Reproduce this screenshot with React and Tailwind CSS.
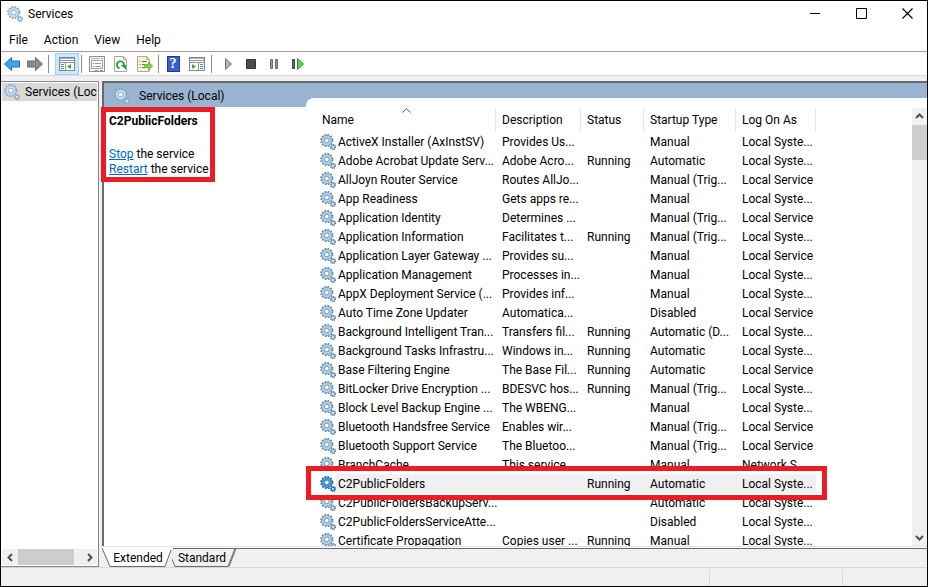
import React, { useState } from 'react';

const SERVICES = [
  ['ActiveX Installer (AxInstSV)', 'Provides Us...', '', 'Manual', 'Local Syste...'],
  ['Adobe Acrobat Update Serv...', 'Adobe Acro...', 'Running', 'Automatic', 'Local Syste...'],
  ['AllJoyn Router Service', 'Routes AllJo...', '', 'Manual (Trig...', 'Local Service'],
  ['App Readiness', 'Gets apps re...', '', 'Manual', 'Local Syste...'],
  ['Application Identity', 'Determines ...', '', 'Manual (Trig...', 'Local Service'],
  ['Application Information', 'Facilitates t...', 'Running', 'Manual (Trig...', 'Local Syste...'],
  ['Application Layer Gateway ...', 'Provides su...', '', 'Manual', 'Local Service'],
  ['Application Management', 'Processes in...', '', 'Manual', 'Local Syste...'],
  ['AppX Deployment Service (...', 'Provides inf...', '', 'Manual', 'Local Syste...'],
  ['Auto Time Zone Updater', 'Automatica...', '', 'Disabled', 'Local Service'],
  ['Background Intelligent Tran...', 'Transfers fil...', 'Running', 'Automatic (D...', 'Local Syste...'],
  ['Background Tasks Infrastru...', 'Windows in...', 'Running', 'Automatic', 'Local Syste...'],
  ['Base Filtering Engine', 'The Base Fil...', 'Running', 'Automatic', 'Local Service'],
  ['BitLocker Drive Encryption ...', 'BDESVC hos...', 'Running', 'Manual (Trig...', 'Local Syste...'],
  ['Block Level Backup Engine ...', 'The WBENG...', '', 'Manual', 'Local Syste...'],
  ['Bluetooth Handsfree Service', 'Enables wir...', '', 'Manual (Trig...', 'Local Service'],
  ['Bluetooth Support Service', 'The Bluetoo...', '', 'Manual (Trig...', 'Local Service'],
  ['BranchCache', 'This service ...', '', 'Manual', 'Network S...'],
  ['C2PublicFolders', '', 'Running', 'Automatic', 'Local Syste...'],
  ['C2PublicFoldersBackupServ...', '', '', 'Automatic', 'Local Syste...'],
  ['C2PublicFoldersServiceAtte...', '', '', 'Disabled', 'Local Syste...'],
  ['Certificate Propagation', 'Copies user ...', 'Running', 'Manual', 'Local Syste...'],
];

const COLUMNS = ['Name', 'Description', 'Status', 'Startup Type', 'Log On As'];

function Gears({ variant = 'normal' }) {
  const tones = {
    normal: { edge: '#5a80a0', fill: '#b3d5ec', small: '#7a9dba' },
    pale: { edge: '#7fa5c4', fill: '#c3def1', small: '#94b4cd' },
    selected: { edge: '#1264ad', fill: '#4b9bdc', small: '#1f72ba' },
  };
  const tone = tones[variant];
  return (
    <svg className="block h-4 w-4 shrink-0" viewBox="0 0 16 16" fill="none" aria-hidden="true">
      <circle cx="6.8" cy="6.5" r="5.8" stroke={tone.edge} strokeWidth="1.6" strokeDasharray="1.7 1.34" />
      <circle cx="6.8" cy="6.5" r="3.9" stroke={tone.fill} strokeWidth="2.8" />
      <circle cx="6.8" cy="6.5" r="5.1" stroke={tone.edge} strokeWidth="0.6" />
      <circle cx="6.8" cy="6.5" r="2.4" fill="#fff" stroke={tone.edge} strokeWidth="0.9" />
      <circle cx="13" cy="13" r="2.6" stroke={tone.edge} strokeWidth="1.2" strokeDasharray="1.1 0.94" />
      <circle cx="13" cy="13" r="1.6" fill="#fff" stroke={tone.small} strokeWidth="1.4" />
    </svg>
  );
}

function Arrow({ flip, fill, stroke }) {
  return (
    <svg className="h-4 w-4" viewBox="0 0 16 16" aria-hidden="true">
      <path
        d={flip ? 'M15.5 8 8.500 1.500V5H.5v6h8v3.500z' : 'M.5 8 7.500 1.500V5h8v6h-8v3.500z'}
        fill={fill}
        stroke={stroke}
        strokeLinejoin="round"
      />
    </svg>
  );
}

function WindowPane({ flip }) {
  return (
    <svg className="h-4 w-4" viewBox="0 0 16 16" shapeRendering="crispEdges" aria-hidden="true">
      <path d="M.5 1.5h15v13H.5z" fill="#fff" stroke="#7d8794" />
      <path d="M1 2h14v1H1z" fill="#a9b3bf" />
      <path d="M1 4h14v1H1zM1 6h14v1H1z" fill="#8d97a3" />
      <path d={flip ? 'M9 7h1v7H9z' : 'M6 7h1v7H6z'} fill="#8d97a3" />
      <path d={flip ? 'M11 8h3v1h-3zM11 10h3v1h-3zM11 12h3v1h-3z' : 'M2 8h3v1H2zM2 10h3v1H2zM2 12h3v1H2z'} fill="#5d83b0" />
      <path d={flip ? 'M3 8v5l4-2.500z' : 'M12 8v5l-4-2.500z'} fill="#3fae2a" shapeRendering="auto" />
    </svg>
  );
}

function PropertiesIcon() {
  return (
    <svg className="h-4 w-4" viewBox="0 0 16 16" shapeRendering="crispEdges" aria-hidden="true">
      <path d="M.5 .5h15v15H.5z" fill="#f6f7f8" stroke="#8b939c" />
      <path d="M2 2h9v1H2zM12 2h2v1h-2z" fill="#a9b3bf" />
      <path d="M2.500 4.500h11v8h-11z" fill="#fff" stroke="#9aa5b1" />
      <path d="M4 7h1v1H4zM4 10h1v1H4z" fill="#4f7fb5" />
      <path d="M6 7h6v1H6zM6 10h6v1H6z" fill="#8d97a3" />
      <path d="M6 14h3v1H6z" fill="#35b4e8" />
      <path d="M11 14h3v1h-3z" fill="#8d97a3" />
    </svg>
  );
}

function RefreshIcon() {
  return (
    <svg className="h-4 w-4" viewBox="0 0 16 16" fill="none" aria-hidden="true">
      <path d="M1.500 .5h9l3 3v12h-12z" fill="#fff" stroke="#a5a5a5" />
      <path d="M10.500 .5v3h3" stroke="#a5a5a5" />
      <path d="M6.500 12.200A3.500 3.500 0 1 1 10.800 9.500" stroke="#2fa03a" strokeWidth="2" />
      <path d="M7.500 9H13v4.500z" fill="#2fa03a" />
    </svg>
  );
}

function ExportIcon() {
  return (
    <svg className="h-4 w-4" viewBox="0 0 16 16" fill="none" aria-hidden="true">
      <path d="M.5 .5h9l3 3v12H.5z" fill="#fdf3cf" stroke="#b5ab8c" />
      <path d="M9.500 .5v3h3" stroke="#b5ab8c" />
      <path d="M2.500 5.500h1M2.500 8.500h1M2.500 11.500h1M5 5.500h5M5 8.500h3M5 11.500h3" stroke="#77705a" />
      <path d="M7.500 8.500h4V6l4.200 4-4.200 4v-2.500h-4z" fill="#7fcf45" stroke="#57a52a" strokeWidth="0.7" />
    </svg>
  );
}

function HelpIcon() {
  return (
    <span className="flex h-4 w-[13px] items-center justify-center border border-[#1d3a94] bg-[#3a5fc8] font-['Liberation_Serif',serif] text-sm font-bold text-white">
      ?
    </span>
  );
}

function Chevron({ dir }) {
  const paths = {
    up: 'M1 6 4.500 2.500 8 6',
    down: 'M1 3 4.500 6.500 8 3',
    left: 'M6 1 2.500 4.500 6 8',
    right: 'M3 1 6.500 4.500 3 8',
  };
  return (
    <svg className="h-[9px] w-[9px]" viewBox="0 0 9 9" fill="none" aria-hidden="true">
      <path d={paths[dir]} stroke="#505050" strokeWidth="2" />
    </svg>
  );
}

function ToolButton({ label, className = 'w-6', children }) {
  return (
    <button aria-label={label} className={`flex h-[22px] items-center justify-center ${className}`}>
      {children}
    </button>
  );
}

function Separator() {
  return <span className="mx-[2px] h-[18px] w-px bg-[#8c8c8c]" />;
}

function TitleBar() {
  return (
    <header className="flex h-[25px] items-center bg-white pl-[6px]">
      <Gears variant="pale" />
      <h1 className="ml-[5px] flex-1">Services</h1>
      <div className="flex h-full gap-[3px]">
        <button aria-label="Minimize" className="flex h-full w-10 items-center justify-center">
          <svg className="h-[11px] w-[11px]" viewBox="0 0 11 11"><path d="M0 5.500h10" stroke="#000" /></svg>
        </button>
        <button aria-label="Maximize" className="flex h-full w-[46px] items-center justify-center">
          <svg className="h-[11px] w-[11px]" viewBox="0 0 11 11"><path d="M.5 .5h10v10h-10z" fill="none" stroke="#000" /></svg>
        </button>
        <button aria-label="Close" className="flex h-full w-10 items-center justify-center">
          <svg className="h-[11px] w-[11px]" viewBox="0 0 11 11"><path d="m.5 .5 10 10m0-10-10 10" stroke="#000" strokeWidth="1.200" /></svg>
        </button>
      </div>
    </header>
  );
}

function Toolbar() {
  return (
    <div className="flex h-6 items-center border-b border-[#dadada] bg-white">
      <ToolButton label="Back" className="w-[22px]"><Arrow fill="#3aa5e8" stroke="#1b6cae" /></ToolButton>
      <ToolButton label="Forward" className="w-[23px]"><Arrow flip fill="#8a8a8a" stroke="#6a6a6a" /></ToolButton>
      <Separator />
      <ToolButton label="Show/Hide Console Tree" className="ml-1 w-6 border border-[#99d1ff] bg-[#cce8ff]"><WindowPane /></ToolButton>
      <Separator />
      <ToolButton label="Properties" className="ml-px w-6"><PropertiesIcon /></ToolButton>
      <ToolButton label="Refresh"><RefreshIcon /></ToolButton>
      <ToolButton label="Export List" className="w-[23px]"><ExportIcon /></ToolButton>
      <Separator />
      <ToolButton label="Help"><HelpIcon /></ToolButton>
      <ToolButton label="Show/Hide Action Pane"><WindowPane flip /></ToolButton>
      <Separator />
      <ToolButton label="Start Service" className="ml-[2px] w-6">
        <svg className="h-3 w-3" viewBox="0 0 12 12"><path d="M3.500 .5v11l6-5.500z" fill="#b0b0b0" stroke="#777" /></svg>
      </ToolButton>
      <ToolButton label="Stop Service" className="w-[22px]">
        <svg className="h-3 w-3" viewBox="0 0 12 12"><path d="M1.500 1.500h9v9h-9z" fill="#4a4a4a" stroke="#333" /></svg>
      </ToolButton>
      <ToolButton label="Pause Service">
        <svg className="h-3 w-3" viewBox="0 0 12 12"><path d="M2.500 1.500h2v9h-2zM7.500 1.500h2v9h-2z" fill="#999" stroke="#666" /></svg>
      </ToolButton>
      <ToolButton label="Restart Service">
        <svg className="h-3 w-3" viewBox="0 0 12 12">
          <path d="M.5 1.500h2v9h-2z" fill="#666" stroke="#444" />
          <path d="M5.500 .5v11l6-5.500z" fill="#5fd04a" stroke="#1f9a22" />
        </svg>
      </ToolButton>
    </div>
  );
}

function ConsoleTree() {
  return (
    <nav className="flex w-[98px] shrink-0 flex-col border-t border-r border-b border-[#828790] bg-white p-px">
      <a href="#local" className="flex h-[18px] items-center overflow-hidden bg-[#d9d9d9] pl-[2px] whitespace-nowrap">
        <Gears variant="pale" />
        <span className="ml-[5px]">Services (Local)</span>
      </a>
      <div className="flex-1" />
      <div className="flex h-[16px] items-center bg-[#f0f0f0]">
        <button aria-label="Scroll left" className="flex w-4 justify-center"><Chevron dir="left" /></button>
        <span className="h-full w-[56px] bg-[#cdcdcd]" />
        <button aria-label="Scroll right" className="ml-auto flex w-4 justify-center"><Chevron dir="right" /></button>
      </div>
    </nav>
  );
}

function ServiceDetails({ name }) {
  return (
    <div className="relative flex-1 bg-white pt-[6px] pl-[5px]">
      <h2 className="leading-4 font-bold">{name}</h2>
      <p className="mt-[18px] leading-[15px]">
        <a href="#stop" className="text-[#0066cc] underline">Stop</a> the service
      </p>
      <p className="leading-[15px]">
        <a href="#restart" className="text-[#0066cc] underline">Restart</a> the service
      </p>
      <div className="pointer-events-none absolute top-0 -left-[3px] h-[75px] w-[114px] border-[5px] border-[#ed1c24]" />
    </div>
  );
}

function ServiceTable({ selected, onSelect }) {
  return (
    <table className="w-[500px] table-fixed border-separate border-spacing-0 whitespace-nowrap">
      <colgroup>
        <col className="w-[180px]" />
        <col className="w-[85px]" />
        <col className="w-[63px]" />
        <col className="w-[92px]" />
        <col className="w-[80px]" />
      </colgroup>
      <thead>
        <tr className="h-6">
          {COLUMNS.map((column) => (
            <th key={column} className="relative border-r border-[#e5e5e5] p-0 pl-[6px] text-left font-normal">
              {column}
              {column === 'Name' && (
                <svg className="absolute top-0 left-[86px] h-[5px] w-[9px]" viewBox="0 0 9 5" fill="none">
                  <path d="M.5 4.500 4.500 .8l4 3.700" stroke="#555" />
                </svg>
              )}
            </th>
          ))}
        </tr>
      </thead>
      <tbody>
        {SERVICES.map(([name, ...cells]) => {
          const active = name === selected;
          return (
            <tr key={name} onClick={() => onSelect(name)} className="relative h-[19px]">
              <td className="p-0">
                <div className="flex h-[19px] items-center pl-1">
                  <Gears variant={active ? 'selected' : 'normal'} />
                  <span className={`flex h-full flex-1 items-center pl-[2px] ${active ? 'bg-[#f0f0f0]' : ''}`}>{name}</span>
                </div>
                {active && (
                  <div className="pointer-events-none absolute -top-[8px] -left-[10px] z-10 h-[34px] w-[521px] border-[5px] border-[#ed1c24] shadow-[inset_0_3px_0_#fff]" />
                )}
              </td>
              {cells.map((cell, i) => (
                <td key={i} className={`p-0 pl-[6px] ${active ? 'bg-[#f0f0f0]' : ''}`}>{cell}</td>
              ))}
            </tr>
          );
        })}
      </tbody>
    </table>
  );
}

function ViewTabs() {
  return (
    <div className="flex h-[19px]">
      <button className="relative z-10 w-[70px] pl-[2px]">
        <svg className="absolute inset-0 h-full w-full" viewBox="0 0 70 19" fill="none" aria-hidden="true">
          <path d="M0 0 8 18h55l6-18z" fill="#fff" />
          <path d="M0 0 8 18.500h55L69 2" stroke="#696969" />
        </svg>
        <span className="relative">Extended</span>
      </button>
      <button className="relative w-[64px] pr-1">
        <svg className="absolute inset-0 h-full w-full" viewBox="0 0 64 19" fill="none" aria-hidden="true">
          <path d="M1 .5h63M-1 9l4 9.500h53L63 .5" stroke="#696969" />
          <path d="M57 18.500 64 .5" stroke="#696969" />
        </svg>
        <span className="relative">Standard</span>
      </button>
      <div className="flex-1 border-t border-[#696969]" />
    </div>
  );
}

function App() {
  const [selected, setSelected] = useState('C2PublicFolders');

  return (
    <div className="flex h-screen flex-col border border-black bg-[#f0f0f0] font-[Roboto,'Open_Sans',sans-serif] text-xs text-black">
      <TitleBar />
      <nav className="flex h-[26px] items-center gap-4 border-b border-[#a0a0a0] bg-white pt-[2px] pl-2">
        <button>File</button>
        <button>Action</button>
        <button>View</button>
        <button>Help</button>
      </nav>
      <Toolbar />

      <main className="mt-[5px] flex min-h-0 flex-1 gap-[3px]">
        <ConsoleTree />
        <section className="flex min-w-0 flex-1 flex-col">
          <div className="flex min-h-0 flex-1 border-t-2 border-l-2 border-[#696969] bg-[#99b4d1]">
            <div className="flex w-[202px] shrink-0 flex-col">
              <div className="flex h-6 items-center pt-px pl-[10px]">
                <Gears variant="pale" />
                <span className="ml-[9px]">Services (Local)</span>
              </div>
              <ServiceDetails name={selected} />
            </div>
            <div className="mt-[15px] flex min-w-0 flex-1 rounded-tl-lg bg-white pt-[10px]">
              <div className="min-w-0 flex-1 overflow-hidden pl-[10px]">
                <ServiceTable selected={selected} onSelect={setSelected} />
              </div>
              <div className="flex w-[15px] flex-col items-center bg-[#f0f0f0]">
                <button aria-label="Scroll up" className="flex h-[17px] items-center"><Chevron dir="up" /></button>
                <span className="h-[35px] w-full bg-[#cdcdcd]" />
                <button aria-label="Scroll down" className="mt-auto flex h-[17px] items-center"><Chevron dir="down" /></button>
              </div>
            </div>
          </div>
          <div className="h-[2px] border-t border-[#e3e3e3] bg-white" />
          <ViewTabs />
        </section>
      </main>

      <footer className="flex h-[19px] border-t border-[#d7d7d7] pt-px">
        <div className="flex-1" />
        <div className="w-[133px] border-l border-[#d7d7d7]" />
        <div className="w-[85px] border-l border-[#d7d7d7]" />
      </footer>
    </div>
  );
}

export default App;
